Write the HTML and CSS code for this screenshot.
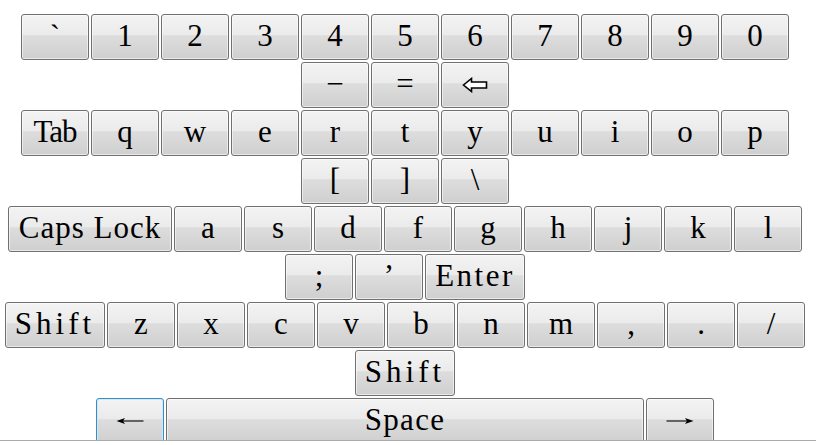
FILE: index.html
```html
<!DOCTYPE html>
<html>
<head>
<meta charset="utf-8">
<link rel="stylesheet" href="styles.css">
</head>
<body>
<div class="page">
  <div class="kb">
    <div class="row">
      <div class="key">`</div><div class="key">1</div><div class="key">2</div><div class="key">3</div><div class="key">4</div><div class="key">5</div><div class="key">6</div><div class="key">7</div><div class="key">8</div><div class="key">9</div><div class="key">0</div>
    </div>
    <div class="row">
      <div class="key">−</div><div class="key">=</div>
      <div class="key"><svg class="bksp" width="26" height="16" viewBox="0 0 26 16"><polygon points="1.5,8 9.5,1.5 9.5,5 24.5,5 24.5,11 9.5,11 9.5,14.5" fill="#fff" stroke="#000" stroke-width="1.6" stroke-linejoin="miter"/></svg></div>
    </div>
    <div class="row">
      <div class="key w-tab">Tab</div><div class="key">q</div><div class="key">w</div><div class="key">e</div><div class="key">r</div><div class="key">t</div><div class="key">y</div><div class="key">u</div><div class="key">i</div><div class="key">o</div><div class="key">p</div>
    </div>
    <div class="row">
      <div class="key">[</div><div class="key">]</div><div class="key">\</div>
    </div>
    <div class="row">
      <div class="key w-caps">Caps Lock</div><div class="key">a</div><div class="key">s</div><div class="key">d</div><div class="key">f</div><div class="key">g</div><div class="key">h</div><div class="key">j</div><div class="key">k</div><div class="key">l</div>
    </div>
    <div class="row">
      <div class="key">;</div><div class="key">’</div><div class="key w-enter">Enter</div>
    </div>
    <div class="row">
      <div class="key w-shift">Shift</div><div class="key">z</div><div class="key">x</div><div class="key">c</div><div class="key">v</div><div class="key">b</div><div class="key">n</div><div class="key">m</div><div class="key">,</div><div class="key">.</div><div class="key">/</div>
    </div>
    <div class="row">
      <div class="key w-shift">Shift</div>
    </div>
    <div class="row">
      <div class="key focus"><svg class="arrow" width="28" height="10" viewBox="0 0 28 10"><line x1="5" y1="5" x2="27.5" y2="5" stroke="#000" stroke-width="1.1"/><polygon points="0.5,5 9,2 7,5 9,8" fill="#000"/></svg></div>
      <div class="key w-space">Space</div>
      <div class="key"><svg class="arrow" width="28" height="10" viewBox="0 0 28 10"><line x1="0.5" y1="5" x2="23" y2="5" stroke="#000" stroke-width="1.1"/><polygon points="27.5,5 19,2 21,5 19,8" fill="#000"/></svg></div>
    </div>
  </div>
</div>
</body>
</html>
```

FILE: styles.css
```css
html, body {
  margin: 0;
  padding: 0;
  background: #ffffff;
}

.page {
  width: 816px;
  height: 440px;
  overflow: hidden;
  border-bottom: 1px solid #a9a9a9;
}

.kb {
  width: 810px;
  padding-top: 13px;
  display: flex;
  flex-direction: column;
}

.row {
  display: flex;
  justify-content: center;
  height: 48px;
}

.key {
  box-sizing: border-box;
  width: 68px;
  height: 46px;
  margin: 1px 1px;
  border: 1px solid #707070;
  border-radius: 3px;
  background: linear-gradient(to bottom, #f3f3f3 0%, #ebebeb 45%, #dddddd 47%, #cfcfcf 100%);
  box-shadow: inset 0 0 0 1px rgba(255, 255, 255, 0.55);
  font-family: "Liberation Serif", "Times New Roman", serif;
  font-size: 31px;
  line-height: 41px;
  padding-bottom: 3px;
  color: #000;
  text-align: center;
  white-space: pre;
  display: flex;
  align-items: center;
  justify-content: center;
}

.key svg {
  display: block;
}

.bksp {
  margin-top: 3px;
}

.arrow {
  margin-top: 2px;
}

.w-tab {
  letter-spacing: -1px;
}

.w-caps {
  width: 164px;
  letter-spacing: 1px;
}

.w-enter {
  width: 100px;
  letter-spacing: 2.5px;
}

.w-shift {
  width: 100px;
  letter-spacing: 4px;
}

.w-space {
  width: 478px;
  letter-spacing: 1.3px;
}

.focus {
  border-color: #3c8cc4;
  box-shadow: inset 0 0 0 1px rgba(200, 235, 252, 0.9);
}
```
